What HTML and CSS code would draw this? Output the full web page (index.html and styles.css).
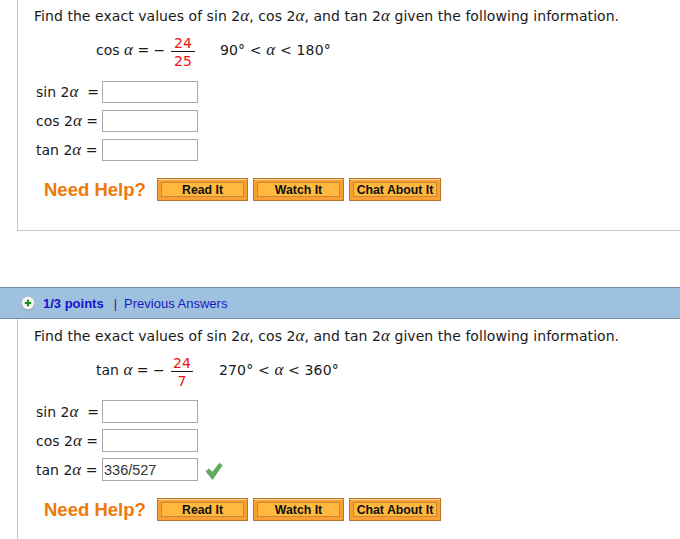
FILE: index.html
```html
<!DOCTYPE html>
<html lang="en">
<head>
    <meta charset="UTF-8">
    <meta name="viewport" content="width=device-width, initial-scale=1.0">
    <title>Double angle questions</title>
    <link rel="stylesheet" href="styles.css">
</head>
<body>

    <div class="question first">
        <p class="prompt">Find the exact values of sin 2<i>α</i>, cos 2<i>α</i>, and tan 2<i>α</i> given the following information.</p>
        <div class="given">
            <span class="equation">cos <i>α</i> = −</span>
            <span class="fraction"><span class="top">24</span><span class="bottom">25</span></span>
            <span class="range">90° &lt; <i>α</i> &lt; 180°</span>
        </div>
        <div class="answers">
            <div class="answerRow"><label>sin 2<i>α</i> &nbsp;=</label><input type="text"></div>
            <div class="answerRow"><label>cos 2<i>α</i> =</label><input type="text"></div>
            <div class="answerRow"><label>tan 2<i>α</i> =</label><input type="text"></div>
        </div>
        <div class="help">
            <span class="helpTitle">Need Help?</span>
            <button class="btnHelp">Read It</button>
            <button class="btnHelp">Watch It</button>
            <button class="btnHelp btnChat">Chat About It</button>
        </div>
    </div>

    <div class="scoreBar">
        <svg class="plusIcon" width="16" height="16" viewBox="0 0 16 16">
            <circle cx="8" cy="8.5" r="7" fill="#8a9aa8"/>
            <circle cx="8" cy="8" r="6.5" fill="#f4f4f0"/>
            <path d="M8 4.8v6.4M4.8 8h6.4" stroke="#178a22" stroke-width="2.2"/>
        </svg>
        <b class="points">1/3 points</b>
        <span class="sep">|</span>
        <a class="prev">Previous Answers</a>
    </div>

    <div class="question second">
        <p class="prompt">Find the exact values of sin 2<i>α</i>, cos 2<i>α</i>, and tan 2<i>α</i> given the following information.</p>
        <div class="given">
            <span class="equation">tan <i>α</i> = −</span>
            <span class="fraction"><span class="top">24</span><span class="bottom">7</span></span>
            <span class="range">270° &lt; <i>α</i> &lt; 360°</span>
        </div>
        <div class="answers">
            <div class="answerRow"><label>sin 2<i>α</i> &nbsp;=</label><input type="text"></div>
            <div class="answerRow"><label>cos 2<i>α</i> =</label><input type="text"></div>
            <div class="answerRow">
                <label>tan 2<i>α</i> =</label><input type="text" value="336/527">
                <svg class="check" width="18" height="18" viewBox="0 0 18 16" preserveAspectRatio="none">
                    <path d="M1 8.5 L4 6 L7.3 9.2 L14.5 1 L17.2 3 L7.5 15.5 Z" fill="#62ad62" stroke="#4c9a4c" stroke-width=".6"/>
                </svg>
            </div>
        </div>
        <div class="help">
            <span class="helpTitle">Need Help?</span>
            <button class="btnHelp">Read It</button>
            <button class="btnHelp">Watch It</button>
            <button class="btnHelp btnChat">Chat About It</button>
        </div>
    </div>

</body>
</html>
```

FILE: styles.css
```css
*{
    margin: 0px;
    padding: 0px;
    box-sizing: border-box;
}
body {
    font-family: "DejaVu Sans", Verdana, sans-serif;
    font-size: 14px;
    color: #1a1a1a;
    background-color: white;
    overflow: hidden;
}
i {
    font-family: "Liberation Serif", serif;
    font-size: 17px;
    line-height: 14px;
}
.question {
    margin-left: 17px;
    padding-left: 16px;
    border-left: 1px solid #c8c8c8;
}
.question.first {
    height: 231px;
    padding-top: 7px;
    border-bottom: 1px solid #c8c8c8;
}
.question.second {
    padding-top: 8px;
    height: 220px;
}
.prompt {
    font-size: 14px;
    line-height: 18px;
    white-space: nowrap;
    letter-spacing: 0.05px;
}
.given {
    display: flex;
    align-items: center;
    margin-top: 7px;
    margin-left: 62px;
    height: 40px;
}
.equation {
    width: 75px;
    margin-bottom: 4px;
    white-space: nowrap;
}
.fraction {
    display: flex;
    flex-direction: column;
    align-items: center;
    width: 24px;
    color: #f01010;
}
.second .fraction {
    width: 22px;
}
.fraction .top {
    width: 100%;
    padding-top: 2px;
    line-height: 15px;
    text-align: center;
    border-bottom: 1px solid #1a1a1a;
}
.fraction .bottom {
    line-height: 19px;
}
.range {
    margin-left: 25px;
    margin-bottom: 5px;
    white-space: nowrap;
    letter-spacing: 0.15px;
}
.second .range {
    margin-left: 26px;
}
.answers {
    display: flex;
    flex-direction: column;
    gap: 7px;
    margin-top: 9px;
}
.second .answers {
    gap: 6px;
    margin-top: 8px;
}
.answerRow {
    display: flex;
    align-items: center;
    height: 22px;
}
.second .answerRow {
    height: 23px;
}
.answerRow label {
    width: 66px;
    margin-left: 2px;
    white-space: nowrap;
}
input {
    width: 96px;
    height: 22px;
    border: 1px solid #a9a9a9;
    background-color: white;
    padding: 0 1px;
    font-family: "Liberation Sans", Arial, sans-serif;
    font-size: 14.5px;
    color: #333;
}
.second input {
    height: 23px;
}
.check {
    margin-left: 7px;
    margin-top: 3px;
}
.help {
    display: flex;
    align-items: center;
    margin-top: 17px;
    margin-left: 10px;
    height: 23px;
}
.helpTitle {
    font-family: "Liberation Sans", Arial, sans-serif;
    font-size: 18.5px;
    font-weight: bold;
    color: #ee7a0a;
    width: 113px;
    white-space: nowrap;
}
.btnHelp {
    width: 91px;
    height: 23px;
    margin-right: 5px;
    font-family: "Liberation Sans", Arial, sans-serif;
    font-size: 12.3px;
    font-weight: bold;
    color: #111;
    background-color: #ffb93f;
    border: 1px solid #b8742a;
    box-shadow: inset 0 1px 0 #ffd9a0, inset 0 0 0 3px #fb9f35, inset 0 0 0 4px #c88a30;
}
.btnChat {
    width: 92px;
}
.scoreBar {
    display: flex;
    align-items: center;
    height: 32px;
    margin-top: 56px;
    padding-left: 20px;
    background-color: #9dc1df;
    border-top: 1px solid #7390a8;
    border-bottom: 1px solid #7390a8;
    font-family: "Liberation Sans", Arial, sans-serif;
    font-size: 13px;
}
.points {
    margin-left: 7px;
    color: #1414c8;
}
.sep {
    margin-left: 10px;
    color: #5a0a70;
}
.prev {
    margin-left: 7px;
    color: #1a1ac0;
}
```
